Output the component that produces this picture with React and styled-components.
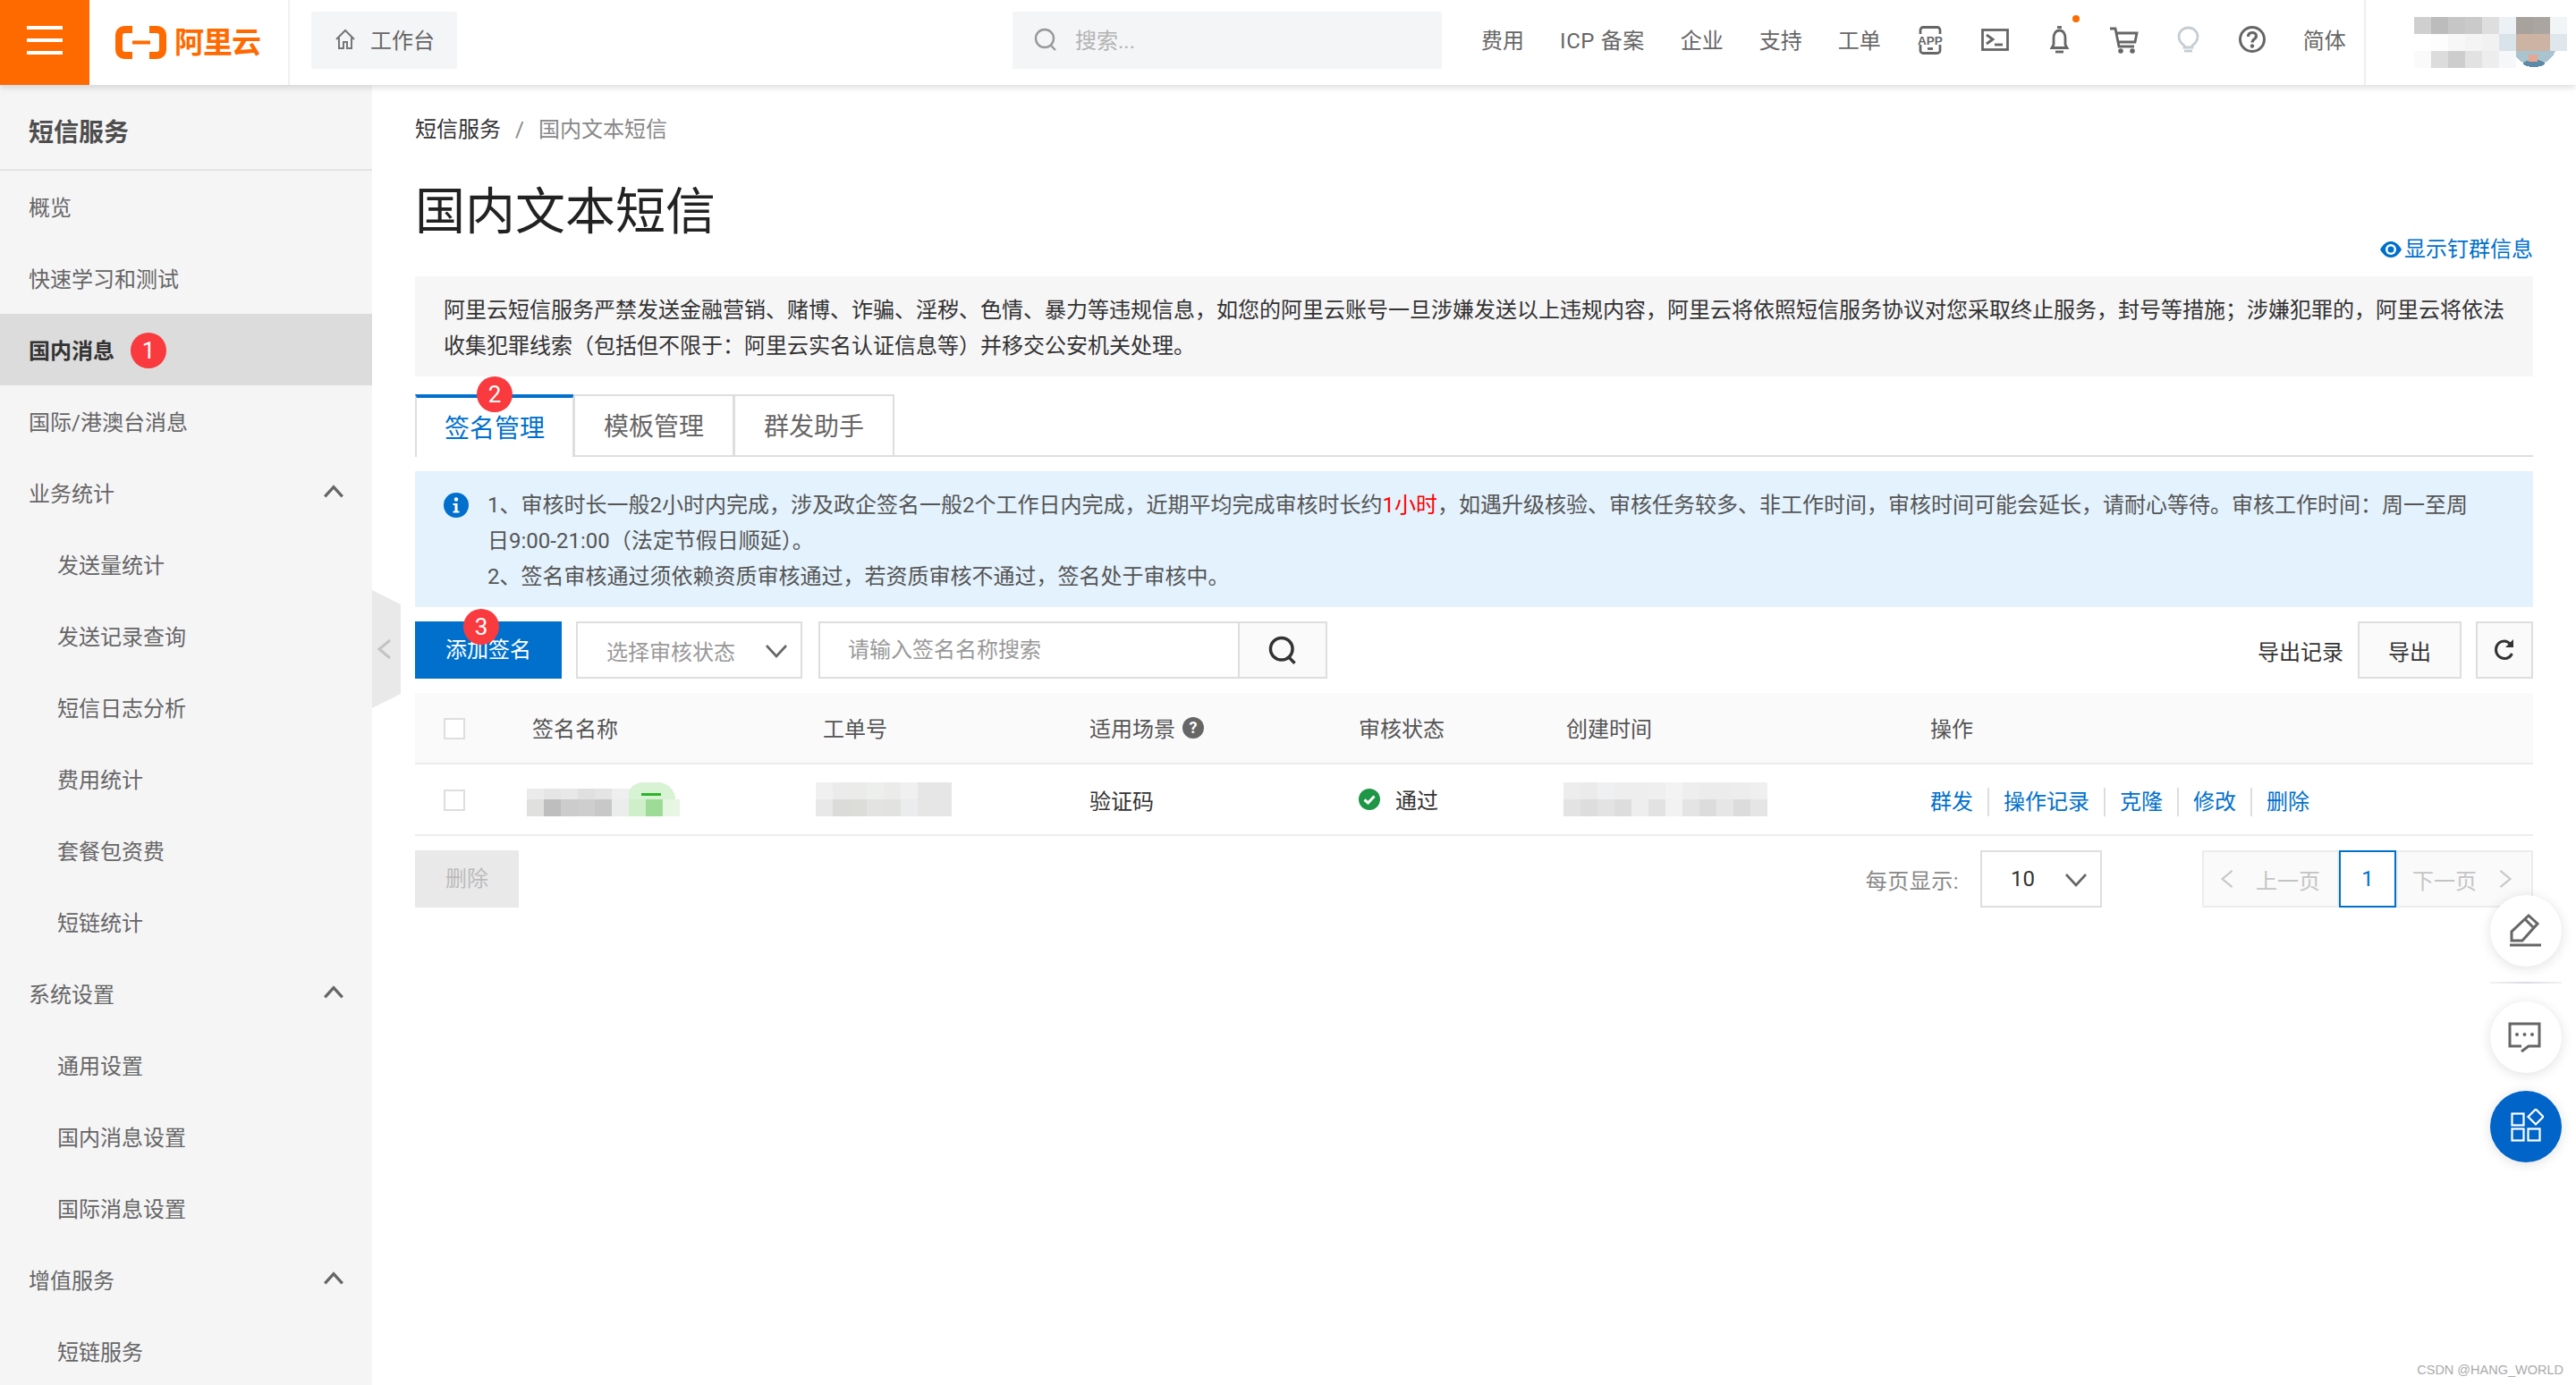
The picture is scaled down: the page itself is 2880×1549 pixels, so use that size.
import React from 'react'
import styled, { createGlobalStyle } from 'styled-components'

const GlobalStyle = createGlobalStyle`
    html, body, #root {
        margin: 0;
        height: 100%;
    }
    body {
        overflow: hidden;
        background: #fff;
        font-family: Roboto, "Noto Sans CJK SC", sans-serif;
        font-size: 24px;
        color: #333;
    }
    * {
        box-sizing: border-box;
    }
`

const BLUE = '#0070cc'
const LINE = '#dedede'

const Page = styled.div`
    position: relative;
    height: 100%;
    display: flex;
    flex-direction: column;
    overflow: hidden;
`

const Header = styled.header`
    position: relative;
    z-index: 2;
    flex: 0 0 95px;
    display: flex;
    background: #fff;
    box-shadow: 0 2px 8px rgba(0, 0, 0, 0.16);
`

const MenuButton = styled.div`
    flex: 0 0 100px;
    background: #ff6a00;
    padding: 29px 30px 0;
    display: flex;
    flex-direction: column;
    gap: 10px;

    span {
        display: block;
        height: 4px;
        background: #fff;
    }
`

const Logo = styled.div`
    flex: 0 0 224px;
    display: flex;
    align-items: center;
    gap: 9px;
    padding-left: 29px;
    border-right: 2px solid #f0f0f0;
    color: #ff6a00;
    font-size: 33px;
    font-weight: 700;
    letter-spacing: -1px;
    line-height: 36px;
`

const Workbench = styled.div`
    flex: 0 0 163px;
    height: 64px;
    margin: 13px 0 0 24px;
    display: flex;
    align-items: center;
    gap: 16px;
    padding: 0 0 3px 26px;
    background: #f4f5f7;
    border-radius: 3px;
    color: #666;
`

const HeaderSearch = styled.div`
    flex: 0 0 480px;
    height: 64px;
    margin: 13px 0 0 621px;
    display: flex;
    align-items: center;
    gap: 20px;
    padding: 0 0 3px 24px;
    background: #f4f5f7;
    color: #b3b3b3;
`

const HeaderNav = styled.nav`
    height: 90px;
    margin-left: 44px;
    width: 987px;
    display: flex;
    align-items: center;
    gap: 40px;
    color: #666;
    white-space: nowrap;
`

const NavText = styled.span`
    margin-bottom: 3px;
    letter-spacing: ${(p) => (p.$wide ? '0.6px' : '0')};
`

const NavIcon = styled.div`
    position: relative;
    flex: 0 0 32px;
    height: 32px;
    color: ${(p) => p.$color || '#666'};

    svg {
        display: block;
    }
`

const NoticeDot = styled.i`
    position: absolute;
    top: -12px;
    right: -6px;
    width: 8px;
    height: 8px;
    border-radius: 50%;
    background: #ff6a00;
`

const UserZone = styled.div`
    flex: 1;
    padding: 19px 0 0 54px;
    border-left: 2px solid #eee;
`

const Body = styled.div`
    flex: 1;
    min-height: 0;
    display: flex;
`

const Sidebar = styled.aside`
    position: relative;
    flex: 0 0 416px;
    background: #f5f5f6;
    color: #666;
`

const SideTitle = styled.div`
    height: 96px;
    padding: 8px 0 0 32px;
    display: flex;
    align-items: center;
    font-size: 28px;
    font-weight: 700;
    color: #4d4d4d;
    border-bottom: 2px solid #e3e3e3;
`

const SideItem = styled.div`
    height: 80px;
    padding: 0 30px 2px ${(p) => (p.$sub ? '64px' : '32px')};
    display: flex;
    align-items: center;
    gap: 18px;
    background: ${(p) => (p.$active ? '#dcdcdc' : 'transparent')};
    color: ${(p) => (p.$active ? '#333' : '#666')};
    font-weight: ${(p) => (p.$active ? 700 : 400)};

    svg {
        margin-left: auto;
    }
`

const Marker = styled.span`
    position: ${(p) => (p.$over ? 'absolute' : 'static')};
    top: ${(p) => p.$top}px;
    left: ${(p) => p.$left}px;
    z-index: 1;
    flex: 0 0 40px;
    width: 40px;
    height: 40px;
    margin-top: ${(p) => (p.$over ? 0 : '4px')};
    border-radius: 50%;
    background: #f93a3f;
    color: #fff;
    font-size: 26px;
    font-weight: 400;
    line-height: 40px;
    text-align: center;
`

const CollapseHandle = styled.div`
    position: absolute;
    top: 565px;
    left: 416px;
    width: 32px;
    height: 132px;
    display: flex;
    align-items: center;
    padding-left: 3px;
    background: #e9e9e9;
    clip-path: polygon(0 0, 100% 16px, 100% 116px, 0 100%);
`

const Main = styled.main`
    flex: 1;
    min-width: 0;
    padding: 30px 48px 0;
`

const Breadcrumb = styled.div`
    height: 40px;
    line-height: 40px;
    display: flex;
    gap: 16px;
    color: #333;

    span + span {
        color: #888;
    }
`

const TitleRow = styled.div`
    height: 100px;
    margin: 32px 0 12px;
    display: flex;
    justify-content: space-between;
    align-items: flex-end;
`

const PageTitle = styled.h1`
    align-self: flex-start;
    margin: 0;
    font-size: 56px;
    font-weight: 400;
    line-height: 80px;
    color: #222;
`

const DingLink = styled.a`
    display: flex;
    align-items: center;
    gap: 2px;
    line-height: 36px;
    color: ${BLUE};
`

const Notice = styled.div`
    padding: 18px 32px 14px;
    background: #f6f6f7;
    line-height: 40px;
    color: #333;
`

const Tabs = styled.div`
    margin-top: 20px;
    height: 70px;
    display: flex;
    border-bottom: 2px solid ${LINE};
`

const Tab = styled.div`
    width: ${(p) => (p.$first ? '178px' : '180px')};
    height: 70px;
    margin-left: ${(p) => (p.$first ? 0 : '-1px')};
    text-align: center;
    font-size: 28px;
    line-height: 70px;
    color: ${(p) => (p.$active ? BLUE : '#666')};
    background: #fff;
    border: 2px solid ${LINE};
    border-top: ${(p) => (p.$active ? `4px solid ${BLUE}` : `2px solid ${LINE}`)};
    border-bottom: ${(p) => (p.$active ? 'none' : `2px solid ${LINE}`)};
`

const InfoBox = styled.div`
    margin-top: 16px;
    padding: 18px 62px 14px 81px;
    position: relative;
    background: #e3f2fd;
    line-height: 40px;
    color: #555;

    svg {
        position: absolute;
        top: 24px;
        left: 32px;
    }

    em {
        font-style: normal;
        color: #f00;
    }
`

const Toolbar = styled.div`
    margin-top: 16px;
    height: 64px;
    display: flex;
    align-items: center;
`

const PrimaryButton = styled.div`
    flex: 0 0 164px;
    height: 64px;
    background: ${BLUE};
    color: #fff;
    line-height: 64px;
    text-align: center;
`

const SelectBox = styled.div`
    flex: 0 0 ${(p) => p.$width}px;
    height: 64px;
    margin-left: ${(p) => p.$gap}px;
    display: flex;
    align-items: center;
    justify-content: space-between;
    padding: 0 ${(p) => p.$right}px 0 ${(p) => p.$left}px;
    border: 2px solid ${LINE};
    background: #fff;
    color: ${(p) => p.$color};
`

const SearchBox = styled.div`
    flex: 0 0 569px;
    height: 64px;
    margin-left: 18px;
    display: flex;
    border: 2px solid ${LINE};
`

const SearchInput = styled.div`
    flex: 1;
    padding-left: 31px;
    line-height: 60px;
    color: #999;
`

const SearchButton = styled.div`
    flex: 0 0 98px;
    display: flex;
    align-items: center;
    justify-content: center;
    background: #fafafa;
    border-left: 2px solid ${LINE};
`

const ExportText = styled.span`
    margin-left: auto;
    color: #333;
`

const GhostButton = styled.div`
    height: 64px;
    margin-left: 16px;
    flex: 0 0 ${(p) => p.$width}px;
    display: flex;
    align-items: center;
    justify-content: center;
    background: #fafafa;
    border: 2px solid ${LINE};
    color: #333;
`

const Row = styled.div`
    height: 80px;
    padding-left: 32px;
    display: grid;
    grid-template-columns: 99px 325px 298px 301px 232px 407px 1fr;
    align-items: center;
    background: ${(p) => (p.$head ? '#fafafa' : '#fff')};
    border-bottom: 2px solid #ececec;
    color: ${(p) => (p.$head ? '#555' : '#333')};
`

const TableWrap = styled.div`
    margin-top: 16px;
`

const Check = styled.span`
    display: block;
    width: 24px;
    height: 24px;
    margin-top: 2px;
    background: #fff;
    border: 2px solid ${LINE};
`

const HeadCell = styled.div`
    display: flex;
    align-items: center;
    gap: 8px;
    margin-bottom: 2px;
`

const HelpDot = styled.span`
    width: 24px;
    height: 24px;
    margin-top: 2px;
    border-radius: 50%;
    background: #666;
    color: #fff;
    font-size: 18px;
    font-weight: 700;
    line-height: 24px;
    text-align: center;
`

const MaskCell = styled.div`
    margin-left: ${(p) => p.$shift}px;

    svg {
        display: block;
    }
`

const StatusCell = styled.div`
    display: flex;
    align-items: center;
    gap: 17px;
    padding-bottom: 2px;

    svg {
        margin-top: 2px;
    }
`

const Ops = styled.div`
    display: flex;
    align-items: center;
    padding-top: 6px;
    color: ${BLUE};

    a + a {
        margin-left: 16px;
        padding-left: 16px;
        border-left: 2px solid #ddd;
    }

    a {
        line-height: 32px;
    }
`

const Footer = styled.div`
    margin-top: 16px;
    height: 64px;
    display: flex;
    align-items: center;
`

const DisabledButton = styled.div`
    flex: 0 0 116px;
    height: 64px;
    background: #e9e9e9;
    color: #bbb;
    line-height: 64px;
    text-align: center;
`

const PageSizeLabel = styled.span`
    margin-left: auto;
    letter-spacing: 0.5px;
    color: #888;
`

const Pager = styled.div`
    flex: 0 0 370px;
    height: 64px;
    margin-left: 112px;
    display: flex;
`

const PagerStep = styled.div`
    flex: 1;
    display: flex;
    align-items: center;
    gap: 20px;
    padding: 0 16px;
    background: #fafafa;
    border: 2px solid #ececec;
    color: #c4c4c4;
    white-space: nowrap;
`

const PagerCurrent = styled.div`
    flex: 0 0 64px;
    border: 2px solid ${BLUE};
    color: ${BLUE};
    line-height: 60px;
    text-align: center;
`

const FloatDock = styled.div`
    position: absolute;
    top: 1001px;
    right: 16px;
    z-index: 3;
    width: 80px;
    display: flex;
    flex-direction: column;
`

const FloatButton = styled.div`
    height: 80px;
    margin-top: ${(p) => p.$gap}px;
    border-radius: 50%;
    display: flex;
    align-items: center;
    justify-content: center;
    background: ${(p) => (p.$blue ? '#0064c8' : '#fff')};
    box-shadow: 0 2px 14px rgba(0, 0, 0, 0.12);
`

const DockLine = styled.div`
    height: 2px;
    margin-top: 17px;
    background: linear-gradient(90deg, #f2f2f2, #d9dbe0, #f2f2f2);
`

const Watermark = styled.div`
    position: absolute;
    right: 14px;
    bottom: 9px;
    font-family: "Liberation Sans", sans-serif;
    font-size: 14.5px;
    color: #aaa;
`

const Chevron = ({ dir = 'down', size = 24, color = '#666', width = 2.6 }) => {
    const points = {
        down: '1,7 12,19 23,7',
        up: '3,17 12,7 21,17',
        left: '17,2 5,12 17,22',
        right: '7,2 19,12 7,22'
    }
    return (
        <svg width={size} height={size} viewBox='0 0 24 24' fill='none'>
            <polyline points={points[dir]} stroke={color} strokeWidth={width} />
        </svg>
    )
}

// blurred-out parts of the screenshot
const Mosaic = ({ width, height, rows, children, cell = 19 }) => (
    <svg width={width} height={height} shapeRendering='crispEdges'>
        {children}
        {rows.map((row, r) =>
            row.colors.map((c, i) =>
                c ? (
                    <rect
                        key={r + '-' + i}
                        x={i * cell}
                        y={row.y}
                        width={cell}
                        height={row.h}
                        fill={c}
                    />
                ) : null
            )
        )}
    </svg>
)

const LogoMark = () => (
    <svg width='57' height='37' viewBox='0 0 57 37' fill='none'>
        <path
            d='M19 4 H11 C6.5 4 4 6.5 4 11 V26 C4 30.5 6.5 33 11 33 H19'
            stroke='#ff6a00'
            strokeWidth='8'
        />
        <path
            d='M38 4 H46 C50.5 4 53 6.5 53 11 V26 C53 30.5 50.5 33 46 33 H38'
            stroke='#ff6a00'
            strokeWidth='8'
        />
        <rect x='19' y='16.5' width='20' height='4' fill='#ff6a00' />
    </svg>
)

const HomeIcon = () => (
    <svg width='24' height='24' viewBox='0 0 24 24' fill='none' stroke='#777' strokeWidth='2'>
        <path d='M2 12 L12 2 L22 12 M5 10 V22 H10 V15 H14 V22 H19 V10' />
    </svg>
)

const SearchIcon = ({ size = 26, color = '#999', width = 2.4 }) => (
    <svg width={size} height={size} viewBox='0 0 26 26' fill='none' stroke={color} strokeWidth={width}>
        <circle cx='12' cy='12' r='10' />
        <line x1='18' y1='19' x2='24' y2='25' />
    </svg>
)

const AppIcon = () => (
    <svg width='32' height='32' viewBox='0 0 32 32' fill='none' stroke='currentColor' strokeWidth='2.8'>
        <rect x='4' y='1.5' width='22' height='29' rx='3' />
        <rect x='-1' y='9' width='32' height='12' fill='#fff' stroke='none' />
        <text x='15' y='20.5' textAnchor='middle' fontFamily='"Liberation Sans"' fontSize='13.5' fontWeight='700' fill='currentColor' stroke='none'>
            APP
        </text>
        <line x1='12' y1='25.5' x2='18' y2='25.5' />
    </svg>
)

const TerminalIcon = () => (
    <svg width='32' height='32' viewBox='0 0 32 32' fill='none' stroke='currentColor' strokeWidth='2.8'>
        <rect x='1.5' y='4.5' width='28' height='22' />
        <polyline points='6,10 13,15 6,20' />
        <line x1='15' y1='21' x2='24' y2='21' />
    </svg>
)

const BellIcon = () => (
    <svg width='32' height='32' viewBox='0 0 32 32' fill='none' stroke='currentColor' strokeWidth='2.8'>
        <path d='M7 24.5 L9 21 V14 C9 8.5 11.5 5 15.5 5 C19.5 5 22 8.5 22 14 V21 L24 24.5 Z' />
        <line x1='13' y1='1.5' x2='18' y2='1.5' />
        <line x1='11' y1='29' x2='20' y2='29' />
    </svg>
)

const CartIcon = () => (
    <svg width='32' height='32' viewBox='0 0 32 32' fill='none' stroke='currentColor' strokeWidth='2.8'>
        <path d='M0 3 H6 L10 23 H27' />
        <path d='M7 8 H30 L28 18 H9' />
        <circle cx='12' cy='28' r='2.8' fill='currentColor' stroke='none' />
        <circle cx='25' cy='28' r='2.8' fill='currentColor' stroke='none' />
    </svg>
)

const BulbIcon = () => (
    <svg width='32' height='32' viewBox='0 0 32 32' fill='none' stroke='currentColor' strokeWidth='2.8'>
        <path d='M11 22 C7 19 5 16 5 12 C5 6 10 2 15.5 2 C21 2 26 6 26 12 C26 16 24 19 20 22 V24 H11 Z' />
        <line x1='11' y1='28' x2='20' y2='28' />
    </svg>
)

const HelpIcon = () => (
    <svg width='32' height='32' viewBox='0 0 32 32' fill='none' stroke='currentColor' strokeWidth='3'>
        <circle cx='15' cy='15' r='13.5' />
        <path d='M10.5 12 C10.5 9 12.5 7.5 15 7.5 C17.5 7.5 19.5 9 19.5 11.5 C19.5 14.5 15 14.5 15 18.5' strokeWidth='3.2' />
        <circle cx='15' cy='22.5' r='2.2' fill='currentColor' stroke='none' />
    </svg>
)

const EyeIcon = () => (
    <svg width='26' height='22' viewBox='0 0 26 22'>
        <path d='M1 11 C5 4 9 2 13 2 C17 2 21 4 25 11 C21 18 17 20 13 20 C9 20 5 18 1 11 Z' fill={BLUE} />
        <circle cx='13' cy='11' r='6' fill='#fff' />
        <circle cx='13' cy='11' r='3.5' fill={BLUE} />
    </svg>
)

const InfoIcon = () => (
    <svg width='28' height='28' viewBox='0 0 28 28'>
        <circle cx='14' cy='14' r='14' fill={BLUE} />
        <circle cx='14' cy='7.5' r='2.2' fill='#fff' />
        <path d='M10.5 12 H15.5 V20.5 H17.5 V22.5 H10.5 V20.5 H12.5 V14 H10.5 Z' fill='#fff' />
    </svg>
)

const PassIcon = () => (
    <svg width='24' height='24' viewBox='0 0 24 24' fill='none'>
        <circle cx='12' cy='12' r='12' fill='#1e9646' />
        <polyline points='6.5,12.5 10.5,16 17.5,8.5' stroke='#fff' strokeWidth='3' />
    </svg>
)

const RefreshIcon = () => (
    <svg width='28' height='28' viewBox='0 0 28 28' fill='none' stroke='#333' strokeWidth='3'>
        <path d='M21 8 C19 5.5 16.5 4 14 4 C8.5 4 4.5 8 4.5 13.5 C4.5 19 8.5 23.5 14 23.5 C18 23.5 21 21 22.5 18' />
        <path d='M24 2 V11 H15 Z' fill='#333' stroke='none' />
    </svg>
)

const EditIcon = () => (
    <svg width='40' height='40' viewBox='0 0 40 40' fill='none' stroke='#666' strokeWidth='3'>
        <path d='M4 31 H16 L33 12 L23 3 L4 21 Z' />
        <line x1='19' y1='7' x2='28' y2='16' />
        <line x1='2' y1='36' x2='37' y2='36' />
    </svg>
)

const ChatIcon = () => (
    <svg width='40' height='40' viewBox='0 0 40 40' fill='none' stroke='#666' strokeWidth='3'>
        <path d='M15 30 H2 V5 H35 V30 H23 L15 36' />
        <circle cx='10' cy='17' r='2' fill='#666' stroke='none' />
        <circle cx='18.5' cy='17' r='2' fill='#666' stroke='none' />
        <circle cx='27' cy='17' r='2' fill='#666' stroke='none' />
    </svg>
)

const AppsIcon = () => (
    <svg width='40' height='40' viewBox='0 0 40 40' fill='none' stroke='#fff' strokeWidth='2.2'>
        <rect x='4.5' y='5.5' width='13' height='13' />
        <rect x='4.5' y='22.5' width='13' height='13' />
        <rect x='22.5' y='22.5' width='13' height='13' />
        <polygon points='31,0.5 39.5,9 31,17.5 22.5,9' />
    </svg>
)

const sideItems = [
    { label: '概览' },
    { label: '快速学习和测试' },
    { label: '国内消息', active: true, badge: '1' },
    { label: '国际/港澳台消息' },
    { label: '业务统计', group: true },
    { label: '发送量统计', sub: true },
    { label: '发送记录查询', sub: true },
    { label: '短信日志分析', sub: true },
    { label: '费用统计', sub: true },
    { label: '套餐包资费', sub: true },
    { label: '短链统计', sub: true },
    { label: '系统设置', group: true },
    { label: '通用设置', sub: true },
    { label: '国内消息设置', sub: true },
    { label: '国际消息设置', sub: true },
    { label: '增值服务', group: true },
    { label: '短链服务', sub: true }
]

const avatarRows = [
    { y: 0, h: 19, colors: ['#cfcfcf', '#bcbcbc', '#c6c6c6', '#cacaca', '#dedede', '#ebf1f4', '#a8a29d', '#aba5a1', '#f2f5f6'] },
    { y: 19, h: 19, colors: ['#ffffff', '#fdfdfd', '#f7f7f7', '#f4f4f4', '#f1f1f1', '#d9e3ea', '#ccb3a2', '#ccb3a4', '#dfe7ec'] },
    { y: 38, h: 19, colors: ['#fafafa', '#dcdcdc', '#cdcdcd', '#e2e2e2', '#ededed', '#f5f7f9'] }
]

const nameRows = [
    { y: 7, h: 12, colors: ['#ebebeb', '#e5e5e5', '#e8e8e8', '#e0e0e0', '#e4e4e4', '#efefef'] },
    { y: 19, h: 19, colors: ['#e0e0df', '#bebebe', '#cccccc', '#cecece', '#c8c8c8', '#ebecec', '#cfefcb', '#9edb97', '#e6f6e3'] }
]

const ticketRows = [
    { y: 0, h: 19, colors: ['#f0f0f0', '#ebebeb', '#ebebea', '#ecefec', '#ebebea', '#f0f0f0', '#e6e6e6', '#e6e6e6'] },
    { y: 19, h: 19, colors: ['#e8e8e8', '#dbdbd9', '#dcdcd9', '#e3e3e2', '#e2e2e0', '#ebecee', '#e6e6e4', '#e6e6e6'] }
]

const timeRows = [
    { y: 0, h: 19, colors: ['#ededee', '#ebebeb', '#eff0f2', '#eeeeef', '#eeeeef', '#efefef', '#f3f3f3', '#eeeeee', '#ececec', '#ececec', '#ededed', '#efefef'] },
    { y: 19, h: 19, colors: ['#e3e3e3', '#dcdddc', '#e2e3e2', '#dddddd', '#eeeeee', '#e2e2e2', '#f2f2f2', '#e4e4e4', '#dcdcdc', '#e6e6e6', '#dcdcdc', '#e5e5e5'] }
]

const App = () => {
    return (
        <Page>
            <GlobalStyle />
            <Header>
                <MenuButton>
                    <span />
                    <span />
                    <span />
                </MenuButton>
                <Logo>
                    <LogoMark />
                    阿里云
                </Logo>
                <Workbench>
                    <HomeIcon />
                    工作台
                </Workbench>
                <HeaderSearch>
                    <SearchIcon />
                    搜索...
                </HeaderSearch>
                <HeaderNav>
                    <NavText>费用</NavText>
                    <NavText $wide>ICP 备案</NavText>
                    <NavText>企业</NavText>
                    <NavText>支持</NavText>
                    <NavText>工单</NavText>
                    <NavIcon>
                        <AppIcon />
                    </NavIcon>
                    <NavIcon>
                        <TerminalIcon />
                    </NavIcon>
                    <NavIcon>
                        <BellIcon />
                        <NoticeDot />
                    </NavIcon>
                    <NavIcon>
                        <CartIcon />
                    </NavIcon>
                    <NavIcon $color='#c5cdd3'>
                        <BulbIcon />
                    </NavIcon>
                    <NavIcon>
                        <HelpIcon />
                    </NavIcon>
                    <NavText>简体</NavText>
                </HeaderNav>
                <UserZone>
                    <Mosaic width={171} height={57} rows={avatarRows}>
                        <circle cx='134' cy='28' r='26' fill='#a9c3cf' />
                        <ellipse cx='134' cy='52' rx='12' ry='4' fill='#5d8aa6' />
                        <rect x='128' y='42' width='10' height='8' fill='#e8a58f' />
                    </Mosaic>
                </UserZone>
            </Header>

            <Body>
                <Sidebar>
                    <SideTitle>短信服务</SideTitle>
                    {sideItems.map((item) => (
                        <SideItem key={item.label} $sub={item.sub} $active={item.active}>
                            {item.label}
                            {item.badge && <Marker>{item.badge}</Marker>}
                            {item.group && <Chevron dir='up' size={26} width={3} />}
                        </SideItem>
                    ))}
                    <CollapseHandle>
                        <Chevron dir='left' size={24} color='#c4c4c4' width={3} />
                    </CollapseHandle>
                </Sidebar>

                <Main>
                    <Breadcrumb>
                        <span>短信服务</span>
                        <span>/</span>
                        <span>国内文本短信</span>
                    </Breadcrumb>
                    <TitleRow>
                        <PageTitle>国内文本短信</PageTitle>
                        <DingLink>
                            <EyeIcon />
                            显示钉群信息
                        </DingLink>
                    </TitleRow>
                    <Notice>
                        阿里云短信服务严禁发送金融营销、赌博、诈骗、淫秽、色情、暴力等违规信息，如您的阿里云账号一旦涉嫌发送以上违规内容，阿里云将依照短信服务协议对您采取终止服务，封号等措施；涉嫌犯罪的，阿里云将依法收集犯罪线索（包括但不限于：阿里云实名认证信息等）并移交公安机关处理。
                    </Notice>
                    <Tabs>
                        <Tab $first $active>
                            签名管理
                        </Tab>
                        <Tab>模板管理</Tab>
                        <Tab>群发助手</Tab>
                    </Tabs>
                    <InfoBox>
                        <InfoIcon />
                        1、审核时长一般2小时内完成，涉及政企签名一般2个工作日内完成，近期平均完成审核时长约<em>1小时</em>，如遇升级核验、审核任务较多、非工作时间，审核时间可能会延长，请耐心等待。审核工作时间：周一至周日9:00-21:00（法定节假日顺延）。
                        <br />
                        2、签名审核通过须依赖资质审核通过，若资质审核不通过，签名处于审核中。
                    </InfoBox>
                    <Toolbar>
                        <PrimaryButton>添加签名</PrimaryButton>
                        <SelectBox $width={253} $gap={16} $left={32} $right={15} $color='#999'>
                            选择审核状态
                            <Chevron />
                        </SelectBox>
                        <SearchBox>
                            <SearchInput>请输入签名名称搜索</SearchInput>
                            <SearchButton>
                                <SearchIcon size={32} color='#333' width={2.8} />
                            </SearchButton>
                        </SearchBox>
                        <ExportText>导出记录</ExportText>
                        <GhostButton $width={116}>导出</GhostButton>
                        <GhostButton $width={64}>
                            <RefreshIcon />
                        </GhostButton>
                    </Toolbar>
                    <TableWrap>
                        <Row $head>
                            <Check />
                            <HeadCell>签名名称</HeadCell>
                            <HeadCell>工单号</HeadCell>
                            <HeadCell>
                                适用场景
                                <HelpDot>?</HelpDot>
                            </HeadCell>
                            <HeadCell>审核状态</HeadCell>
                            <HeadCell>创建时间</HeadCell>
                            <HeadCell>操作</HeadCell>
                        </Row>
                        <Row>
                            <Check />
                            <MaskCell $shift={-6}>
                                <Mosaic width={171} height={38} rows={nameRows}>
                                    <rect x='111' y='0' width='55' height='38' rx='19' fill='#d8f3d3' />
                                    <rect x='128' y='12' width='22' height='3' fill='#2bb52b' />
                                </Mosaic>
                            </MaskCell>
                            <MaskCell $shift={-8}>
                                <Mosaic width={152} height={38} rows={ticketRows} />
                            </MaskCell>
                            <div>验证码</div>
                            <StatusCell>
                                <PassIcon />
                                通过
                            </StatusCell>
                            <MaskCell $shift={-3}>
                                <Mosaic width={228} height={38} rows={timeRows} />
                            </MaskCell>
                            <Ops>
                                <a>群发</a>
                                <a>操作记录</a>
                                <a>克隆</a>
                                <a>修改</a>
                                <a>删除</a>
                            </Ops>
                        </Row>
                    </TableWrap>
                    <Footer>
                        <DisabledButton>删除</DisabledButton>
                        <PageSizeLabel>每页显示:</PageSizeLabel>
                        <SelectBox $width={136} $gap={24} $left={32} $right={15} $color='#333'>
                            10
                            <Chevron />
                        </SelectBox>
                        <Pager>
                            <PagerStep>
                                <Chevron dir='left' size={22} color='#c8c8c8' width={2.4} />
                                上一页
                            </PagerStep>
                            <PagerCurrent>1</PagerCurrent>
                            <PagerStep>
                                下一页
                                <Chevron dir='right' size={22} color='#c8c8c8' width={2.4} />
                            </PagerStep>
                        </Pager>
                    </Footer>
                </Main>
            </Body>

            <Marker $over $top={421} $left={533}>
                2
            </Marker>
            <Marker $over $top={681} $left={518}>
                3
            </Marker>

            <FloatDock>
                <FloatButton>
                    <EditIcon />
                </FloatButton>
                <DockLine />
                <FloatButton $gap={20}>
                    <ChatIcon />
                </FloatButton>
                <FloatButton $gap={20} $blue>
                    <AppsIcon />
                </FloatButton>
            </FloatDock>
            <Watermark>CSDN @HANG_WORLD</Watermark>
        </Page>
    )
}

export default App
